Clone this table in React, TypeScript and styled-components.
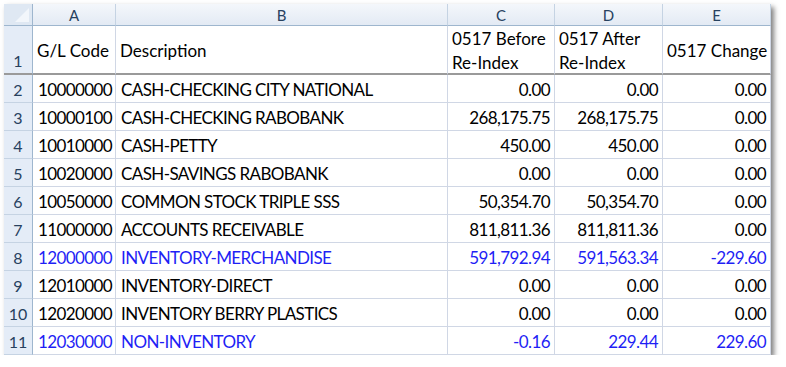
import React from "react";
import styled, { createGlobalStyle } from "styled-components";

const GlobalStyle = createGlobalStyle`
  html, body {
    margin: 0;
    padding: 0;
    background: #ffffff;
  }
  body {
    font-family: Lato, "Open Sans", sans-serif;
  }
`;

interface Row {
  code: string;
  desc: string;
  before: string;
  after: string;
  change: string;
  blue?: boolean;
}

const rows: Row[] = [
  { code: "10000000", desc: "CASH-CHECKING CITY NATIONAL", before: "0.00", after: "0.00", change: "0.00" },
  { code: "10000100", desc: "CASH-CHECKING RABOBANK", before: "268,175.75", after: "268,175.75", change: "0.00" },
  { code: "10010000", desc: "CASH-PETTY", before: "450.00", after: "450.00", change: "0.00" },
  { code: "10020000", desc: "CASH-SAVINGS RABOBANK", before: "0.00", after: "0.00", change: "0.00" },
  { code: "10050000", desc: "COMMON STOCK TRIPLE SSS", before: "50,354.70", after: "50,354.70", change: "0.00" },
  { code: "11000000", desc: "ACCOUNTS RECEIVABLE", before: "811,811.36", after: "811,811.36", change: "0.00" },
  { code: "12000000", desc: "INVENTORY-MERCHANDISE", before: "591,792.94", after: "591,563.34", change: "-229.60", blue: true },
  { code: "12010000", desc: "INVENTORY-DIRECT", before: "0.00", after: "0.00", change: "0.00" },
  { code: "12020000", desc: "INVENTORY BERRY PLASTICS", before: "0.00", after: "0.00", change: "0.00" },
  { code: "12030000", desc: "NON-INVENTORY", before: "-0.16", after: "229.44", change: "229.60", blue: true },
];

const Sheet = styled.div`
  margin: 4px 0 0 4px;
  display: grid;
  grid-template-columns: 29px 83px 332px 107px 108px 108px;
  grid-template-rows: 22px 49px repeat(10, 28px);
  width: 767px;
  background: #ffffff;
  box-shadow: 3px 3px 5px rgba(0, 0, 0, 0.5);
  font-family: Lato, "Open Sans", sans-serif;
`;

const Corner = styled.div`
  position: relative;
  background: #dfe8f3;
  border-right: 1px solid #9eb6ce;
  border-bottom: 1px solid #9eb6ce;
  &::after {
    content: "";
    position: absolute;
    right: 3px;
    bottom: 3px;
    width: 0;
    height: 0;
    border-left: 14px solid transparent;
    border-bottom: 14px solid #f2f6fb;
  }
`;

const ColHead = styled.div`
  display: flex;
  align-items: center;
  justify-content: center;
  background: linear-gradient(#f4f7fb, #e3eaf4);
  border-right: 1px solid #c5d3e3;
  border-bottom: 1px solid #9eb6ce;
  font-size: 15px;
  color: #27415f;
`;

const RowHead = styled.div<{ $first?: boolean }>`
  display: flex;
  align-items: flex-end;
  justify-content: center;
  padding-bottom: ${({ $first }) => ($first ? "3px" : "3px")};
  background: #e4ecf7;
  border-right: 1px solid #9eb6ce;
  border-bottom: ${({ $first }) => ($first ? "2px solid #9a9a9a" : "1px solid #c5d3e3")};
  font-size: 16px;
  color: #27415f;
`;

const TitleCell = styled.div`
  display: flex;
  flex-direction: column;
  justify-content: center;
  padding: 2px 4px 0;
  border-right: 1px solid #d0d7e5;
  border-bottom: 2px solid #9a9a9a;
  font-size: 17px;
  line-height: 24px;
  color: #000;
  white-space: nowrap;
  overflow: hidden;
`;

const Cell = styled.div<{ $num?: boolean; $blue?: boolean }>`
  display: flex;
  align-items: center;
  justify-content: ${({ $num }) => ($num ? "flex-end" : "flex-start")};
  padding: 1px 4px 0 ${({ $num }) => ($num ? "4px" : "5px")};
  border-right: 1px solid #d0d7e5;
  border-bottom: 1px solid #d0d7e5;
  font-size: 17px;
  letter-spacing: -0.6px;
  color: ${({ $blue }) => ($blue ? "#1f1ff5" : "#000")};
  white-space: nowrap;
  overflow: hidden;
`;

export default function App() {
  return (
    <>
      <GlobalStyle />
      <Sheet>
        <Corner />
        {["A", "B", "C", "D", "E"].map((c) => (
          <ColHead key={c}>{c}</ColHead>
        ))}

        <RowHead $first>1</RowHead>
        <TitleCell>G/L Code</TitleCell>
        <TitleCell>Description</TitleCell>
        <TitleCell>
          <span>0517 Before</span>
          <span>Re-Index</span>
        </TitleCell>
        <TitleCell>
          <span>0517 After</span>
          <span>Re-Index</span>
        </TitleCell>
        <TitleCell>0517 Change</TitleCell>

        {rows.map((r, i) => (
          <React.Fragment key={r.code}>
            <RowHead>{i + 2}</RowHead>
            <Cell $blue={r.blue}>{r.code}</Cell>
            <Cell $blue={r.blue}>{r.desc}</Cell>
            <Cell $num $blue={r.blue}>{r.before}</Cell>
            <Cell $num $blue={r.blue}>{r.after}</Cell>
            <Cell $num $blue={r.blue}>{r.change}</Cell>
          </React.Fragment>
        ))}
      </Sheet>
    </>
  );
}
